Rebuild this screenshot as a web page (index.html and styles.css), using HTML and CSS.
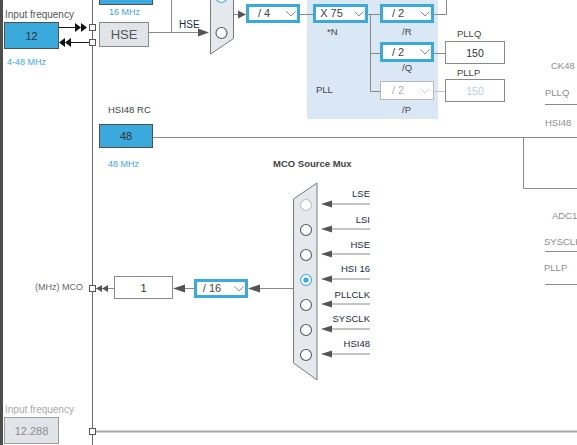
FILE: index.html
```html
<!DOCTYPE html>
<html>
<head>
<meta charset="utf-8">
<link rel="stylesheet" href="styles.css">
</head>
<body>
<div class="canvas">
  <div class="pll"></div>

  <svg class="wires" viewBox="0 0 577 445" width="577" height="445">
    <path class="w-main" d="M92.5 0V445"/>
    <g class="w-grey">
      <path d="M148 32.5H200M171.5 0V32.5"/>
      <path d="M233 14.5H239"/>
      <path d="M300 14.5H313M368 14.5H380M370.5 14.5V91.5M370.5 53.5H380M370.5 91.5H380"/>
      <path d="M434 14.5H446.5V0M434 53.5H445"/>
      <path d="M153 137.5H577M523.5 137.5V188.5H577"/>
      <path d="M545 104.5H577M545 251.5H577M545 284.5H577"/>
      <path d="M293 288.5H259M194 288.5H184M114 288.5H96"/>
      <path d="M331 204H370M331 229H370M331 254H370M331 279H370M331 304H370M331 329H370M331 354H370"/>
    </g>
    <path class="w-light" d="M434 91.5H445"/>
    <path class="w-bottom" d="M96 431.5H577"/>
    <path class="w-black" d="M58 27.5H76M71 42.5H90"/>
    <g class="ah-black">
      <polygon points="75,23 81,27.5 75,32"/>
      <polygon points="81,23 87,27.5 81,32"/>
      <polygon points="65,38 59,42.5 65,47"/>
      <polygon points="71,38 65,42.5 71,47"/>
    </g>
    <g class="ah">
      <polygon points="198,28.5 209,32.5 198,36.5"/>
      <polygon points="238,10.5 246,14.5 238,18.5"/>
      <polygon points="260,284.5 248,288.5 260,292.5"/>
      <polygon points="185,284.5 173,288.5 185,292.5"/>
      <polygon points="102,285 96,288.5 102,292"/>
      <polygon points="108,285 102,288.5 108,292"/>
      <polygon points="332,200.5 321,204 332,207.5"/>
      <polygon points="332,225.5 321,229 332,232.5"/>
      <polygon points="332,250.5 321,254 332,257.5"/>
      <polygon points="332,275.5 321,279 332,282.5"/>
      <polygon points="332,300.5 321,304 332,307.5"/>
      <polygon points="332,325.5 321,329 332,332.5"/>
      <polygon points="332,350.5 321,354 332,357.5"/>
    </g>
    <g class="sq">
      <rect x="89.5" y="24.5" width="6" height="6"/>
      <rect x="89.5" y="39.5" width="6" height="6"/>
      <rect x="89.5" y="285.5" width="6" height="6"/>
      <rect x="89.5" y="428.5" width="6" height="6"/>
    </g>
    <polygon class="mux" points="210.5,-10 233.5,-10 233.5,38.5 210.5,54"/>
    <circle class="rad on" cx="221.5" cy="-3" r="5.5"/>
    <circle class="rad" cx="221.5" cy="33" r="5.5"/>
    <polygon class="mux" points="293.5,199 317,183 317,380 293.5,363"/>
    <circle class="rad off" cx="306" cy="205" r="5.5"/>
    <circle class="rad" cx="306" cy="230" r="5.5"/>
    <circle class="rad" cx="306" cy="255" r="5.5"/>
    <circle class="rad on" cx="306" cy="280" r="5.5"/>
    <circle class="dot" cx="306" cy="280" r="2.6"/>
    <circle class="rad" cx="306" cy="305" r="5.5"/>
    <circle class="rad" cx="306" cy="330" r="5.5"/>
    <circle class="rad" cx="306" cy="355" r="5.5"/>
  </svg>

  <div class="edge"></div>

  <!-- sources -->
  <div class="node blue b-16"></div>
  <div class="lbl blue-t l-16">16 MHz</div>
  <div class="lbl l-inf1">Input frequency</div>
  <div class="node blue b-12">12</div>
  <div class="lbl blue-t l-448">4-48 MHz</div>
  <div class="node hse">HSE</div>
  <div class="lbl navy l-hse">HSE</div>

  <!-- PLL -->
  <div class="node dd d-4"><span class="v">/ 4</span><svg class="chev" viewBox="0 0 10 6"><path d="M0.5 0.5L5 5L9.5 0.5"/></svg></div>
  <div class="node dd d-75"><span class="v">X 75</span><svg class="chev" viewBox="0 0 10 6"><path d="M0.5 0.5L5 5L9.5 0.5"/></svg></div>
  <div class="node dd d-r"><span class="v">/ 2</span><svg class="chev" viewBox="0 0 10 6"><path d="M0.5 0.5L5 5L9.5 0.5"/></svg></div>
  <div class="node dd d-q"><span class="v">/ 2</span><svg class="chev" viewBox="0 0 10 6"><path d="M0.5 0.5L5 5L9.5 0.5"/></svg></div>
  <div class="node dd off d-p"><span class="v">/ 2</span><svg class="chev" viewBox="0 0 10 6"><path d="M0.5 0.5L5 5L9.5 0.5"/></svg></div>
  <div class="lbl l-n">*N</div>
  <div class="lbl l-r">/R</div>
  <div class="lbl l-q">/Q</div>
  <div class="lbl l-p">/P</div>
  <div class="lbl l-pll">PLL</div>
  <div class="lbl l-pllq">PLLQ</div>
  <div class="lbl l-pllp">PLLP</div>
  <div class="node val v-q">150</div>
  <div class="node val dis v-p">150</div>

  <!-- right column -->
  <div class="lbl grey l-ck48">CK48</div>
  <div class="lbl grey l-rq">PLLQ</div>
  <div class="lbl grey l-rh">HSI48</div>
  <div class="lbl grey l-adc">ADC12</div>
  <div class="lbl grey l-sys">SYSCLK</div>
  <div class="lbl grey l-rp">PLLP</div>

  <!-- HSI48 -->
  <div class="lbl l-hsi48">HSI48 RC</div>
  <div class="node blue b-48">48</div>
  <div class="lbl blue-t l-48">48 MHz</div>

  <!-- MCO -->
  <div class="lbl bold l-mco">MCO Source Mux</div>
  <div class="lbl navy mx m1">LSE</div>
  <div class="lbl navy mx m2">LSI</div>
  <div class="lbl navy mx m3">HSE</div>
  <div class="lbl navy mx m4">HSI 16</div>
  <div class="lbl navy mx m5">PLLCLK</div>
  <div class="lbl navy mx m6">SYSCLK</div>
  <div class="lbl navy mx m7">HSI48</div>
  <div class="node dd d-16"><span class="v">/ 16</span><svg class="chev" viewBox="0 0 10 6"><path d="M0.5 0.5L5 5L9.5 0.5"/></svg></div>
  <div class="node val v-1">1</div>
  <div class="lbl l-mhz">(MHz) MCO</div>

  <!-- bottom -->
  <div class="lbl light l-inf2">Input frequency</div>
  <div class="node hse f-12288">12.288</div>
</div>
</body>
</html>
```

FILE: styles.css
```css
* { box-sizing: border-box; margin: 0; padding: 0; }
html, body { background: #fff; }
body { margin: 0; font-family: "Liberation Sans", Arial, sans-serif; }

.canvas { position: relative; width: 577px; height: 445px; overflow: hidden; background: #fff; }
.edge { position: absolute; left: 0; top: 0; width: 3px; height: 445px; background: #4d4d4d; }
.pll { position: absolute; left: 307px; top: 0; width: 131px; height: 119px; background: #dae7f4; }
.wires { position: absolute; left: 0; top: 0; }

.w-main { fill: none; stroke: #6a6a6a; stroke-width: 1; }
.w-grey path { fill: none; stroke: #8a8a8a; stroke-width: 1; }
.w-light { fill: none; stroke: #c6c6c6; }
.w-bottom { fill: none; stroke: #a8a8a8; stroke-width: 2; }
.w-black { fill: none; stroke: #1a1a1a; stroke-width: 1; }
.ah-black polygon { fill: #111; }
.ah polygon { fill: #555; }
.sq rect { fill: #fff; stroke: #555; stroke-width: 1; }
.mux { fill: #e5e8ec; stroke: #7a7a7a; stroke-width: 1; }
.rad { fill: #fff; stroke: #5a5a5a; stroke-width: 1.1; }
.rad.off { stroke: #bdbdbd; }
.rad.on { stroke: #3aa9dc; }
.dot { fill: #3aa9dc; }

.node { position: absolute; display: flex; align-items: center; justify-content: center; white-space: nowrap; }
.blue { background: #3aa9dc; border: 1px solid #505050; color: #333; font-size: 11px; }
.hse { background: #e1e4e8; border: 1px solid #8a8a8a; color: #555; font-size: 13px; }
.val { background: #fff; border: 1px solid #8a8a8a; color: #333; font-size: 10.5px; }
.val.dis { color: #b7cde2; }

.dd { background: #fff; border: 3px solid #3aa9dc; color: #444; font-size: 11px; height: 19px; width: 54px; }
.dd .v { flex: 1; text-align: center; padding-right: 7px; line-height: 13px; }
.dd .chev { width: 10px; height: 6px; margin-right: 1px; flex: none; }
.dd .chev path { fill: none; stroke: #8a8a8a; stroke-width: 1; }
.dd.off { border: 1px solid #b8b8b8; padding: 0 2px; color: #b0b0b0; }
.dd.off .chev path { stroke: #cfcfcf; }

.b-16 { left: 99px; top: -20px; width: 54px; height: 25px; }
.b-12 { left: 4px; top: 22px; width: 55px; height: 27px; }
.hse.f-12288 { left: 4px; top: 417px; width: 55px; height: 27px; color: #8c8c8c; border-color: #9c9c9c; font-size: 11px; }
.node.hse:not(.f-12288) { left: 99px; top: 22px; width: 50px; height: 25px; }
.b-48 { left: 99px; top: 124px; width: 54px; height: 24px; }

.d-4 { left: 246px; top: 4px; }
.d-75 { left: 313px; top: 4px; width: 55px; }
.d-r { left: 380px; top: 4px; }
.d-q { left: 380px; top: 42px; height: 20px; }
.d-p { left: 380px; top: 81px; }
.d-16 { left: 194px; top: 279px; }
.v-q { left: 445px; top: 41px; width: 60px; height: 23px; }
.v-p { left: 445px; top: 79px; width: 60px; height: 23px; }
.v-1 { left: 114px; top: 276px; width: 59px; height: 23px; font-size: 11px; }

.lbl { position: absolute; font-size: 9.5px; line-height: 12px; white-space: nowrap; color: #444; }
.blue-t { color: #3aa9dc; font-size: 9px; }
.navy { color: #1c2b45; }
.grey { color: #8e8e8e; }
.light { color: #a9a9a9; }
.bold { font-weight: bold; color: #444; }

.l-inf1 { left: 5px; top: 9px; font-size: 10px; color: #555; }
.l-16 { left: 109px; top: 6px; }
.l-448 { left: 7px; top: 56px; }
.l-hse { left: 179px; top: 19px; font-size: 10px; }
.l-n { left: 327px; top: 26px; }
.l-r { left: 402px; top: 26px; }
.l-q { left: 402px; top: 62px; }
.l-p { left: 402px; top: 104px; }
.l-pll { left: 316px; top: 84px; }
.l-pllq { left: 457px; top: 28px; }
.l-pllp { left: 457px; top: 67px; }

.l-ck48 { left: 551px; top: 60px; }
.l-rq { left: 545px; top: 87px; }
.l-rh { left: 545px; top: 117px; }
.l-adc { left: 552px; top: 210px; }
.l-sys { left: 544px; top: 236px; }
.l-rp { left: 544px; top: 262px; }

.l-hsi48 { left: 108px; top: 104px; }
.l-48 { left: 108px; top: 158px; }

.l-mco { left: 273px; top: 158px; }
.mx { right: 207px; }
.m1 { top: 188px; }
.m2 { top: 214px; }
.m3 { top: 239px; }
.m4 { top: 263px; }
.m5 { top: 289px; }
.m6 { top: 313px; }
.m7 { top: 338px; }
.l-mhz { right: 494px; top: 281px; font-size: 9px; color: #666; }

.l-inf2 { left: 5px; top: 404px; font-size: 10px; }
```
